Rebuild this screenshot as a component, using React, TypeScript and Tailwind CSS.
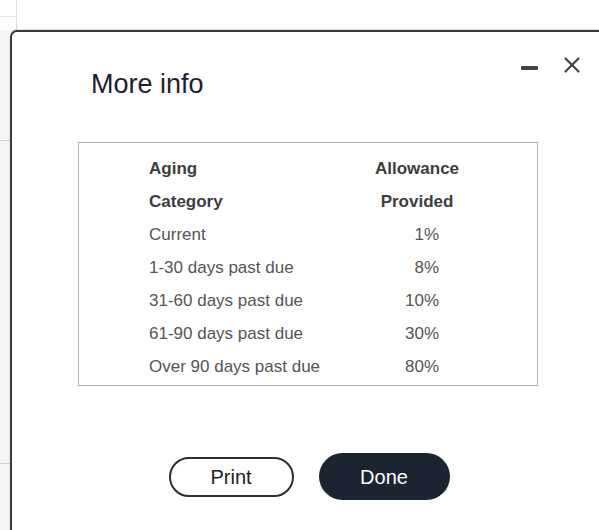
import { X } from 'lucide-react';

const ROWS: [string, string][] = [
  ['Current', '1%'],
  ['1-30 days past due', '8%'],
  ['31-60 days past due', '10%'],
  ['61-90 days past due', '30%'],
  ['Over 90 days past due', '80%'],
];

/** The aging table inside the dialog. */
function AgingTable() {
  return (
    <div className="flex h-[244px] w-[460px] flex-col border border-[#b3b3b3] pt-[9px] pl-[70px] text-[17px]">
      <div className="flex h-[33px] items-center font-bold text-[#3d3d3d]">
        <span className="w-[226px]">Aging</span>
        <span className="w-[84px] text-center">Allowance</span>
      </div>
      <div className="flex h-[33px] items-center font-bold text-[#3d3d3d]">
        <span className="w-[226px]">Category</span>
        <span className="w-[84px] text-center">Provided</span>
      </div>
      {ROWS.map(([label, pct]) => (
        <div key={label} className="flex h-[33px] items-center text-[#555]">
          <span className="w-[226px]">{label}</span>
          <span className="w-[84px] pr-[20px] text-right">{pct}</span>
        </div>
      ))}
    </div>
  );
}

export default function App() {
  return (
    <div
      className="relative h-[530px] w-[599px] overflow-hidden bg-white"
      style={{ fontFamily: '"Liberation Sans", Arial, sans-serif' }}
    >
      {/* page behind the dialog */}
      <div className="flex h-[30px]">
        <div className="h-full w-[17px] border-r border-[#dcdcdc]">
          <div className="mt-[16px] border-t border-[#e6e6e6]" />
        </div>
      </div>
      <div className="flex h-[500px] w-[10px] flex-col bg-[#f6f6f6]">
        <div className="mt-[110px] border-t border-[#d0d0d0]" />
        <div className="mt-[322px] border-t border-[#d0d0d0]" />
      </div>

      {/* dialog */}
      <div className="absolute top-[30px] left-[10px] right-[-20px] bottom-[-20px] rounded-tl-[7px] border-2 border-[#3a3a3a] bg-white shadow-[0_-1px_2px_rgba(0,0,0,0.15)]">
        <div className="absolute top-[34px] left-[509px] h-[4px] w-[17px] rounded-[1px] bg-[#444]" />
        <X className="absolute top-[20px] left-[547px] h-[26px] w-[26px] text-[#3b4250]" strokeWidth={2} />

        <div className="ml-[66px] flex w-[460px] flex-col">
          <h1 className="mt-[37px] ml-[13px] h-[30px] text-[27px] leading-[30px] text-[#1b2130]">
            More info
          </h1>
          <div className="mt-[43px]">
            <AgingTable />
          </div>
          <div className="mt-[67px] flex items-center justify-center gap-[25px] pl-[2px]">
            <button
              type="button"
              className="h-[40px] w-[125px] rounded-full border-2 border-[#2f2f2f] text-[20px] text-[#222]"
            >
              Print
            </button>
            <button
              type="button"
              className="h-[47px] w-[131px] rounded-full bg-[#1c2331] text-[20px] text-white"
            >
              Done
            </button>
          </div>
        </div>
      </div>
    </div>
  );
}
